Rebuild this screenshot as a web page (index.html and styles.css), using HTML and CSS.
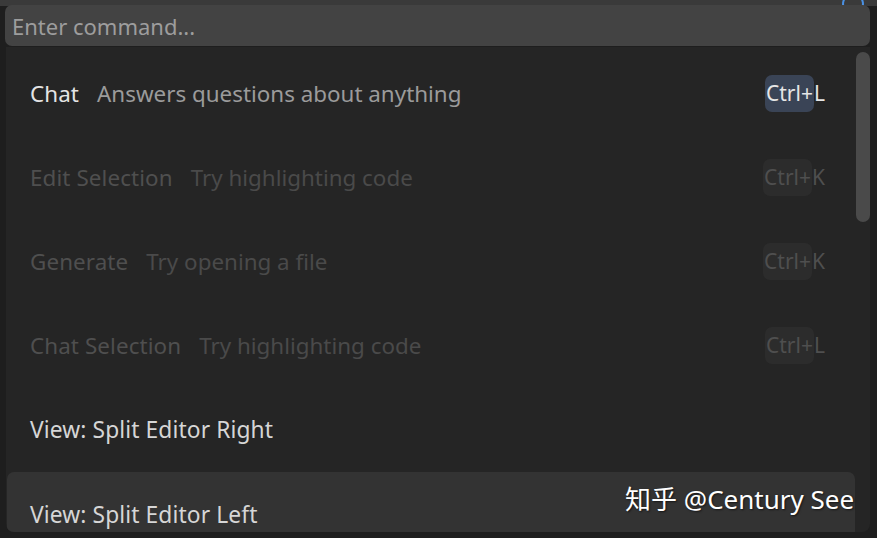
FILE: index.html
```html
<!DOCTYPE html>
<html>
<head>
    <link rel="stylesheet" href="styles.css">
</head>
<body>
    <div class="titlebar">
        <span class="account-ring"></span>
    </div>

    <div class="palette">
        <div class="command-input">Enter command...</div>

        <div class="command-list">
            <ul class="items">
                <li class="item">
                    <span class="label">Chat</span>
                    <span class="desc">Answers questions about anything</span>
                    <span class="shortcut"><span class="key">Ctrl+</span>L</span>
                </li>
                <li class="item disabled">
                    <span class="label">Edit Selection</span>
                    <span class="desc">Try highlighting code</span>
                    <span class="shortcut"><span class="key">Ctrl+</span>K</span>
                </li>
                <li class="item disabled">
                    <span class="label">Generate</span>
                    <span class="desc">Try opening a file</span>
                    <span class="shortcut"><span class="key">Ctrl+</span>K</span>
                </li>
                <li class="item disabled">
                    <span class="label">Chat Selection</span>
                    <span class="desc">Try highlighting code</span>
                    <span class="shortcut"><span class="key">Ctrl+</span>L</span>
                </li>
                <li class="item plain">
                    <span class="label">View: Split Editor Right</span>
                </li>
                <li class="item plain selected">
                    <span class="label">View: Split Editor Left</span>
                </li>
            </ul>
            <div class="scrollbar">
                <div class="thumb"></div>
            </div>
        </div>
    </div>

    <div class="watermark">知乎 @Century See</div>
</body>
</html>
```

FILE: styles.css
```css
:root {
    --bg: #1e1e1e;
    --bar: #3a3a3a;
    --input: #434343;
    --list: #252525;
    --hover: #333333;
    --text: #e4e4e4;
    --muted: #9b9b9b;
    --dim: #4f4f4f;
}

body {
    margin: 0;
    width: 877px;
    height: 538px;
    overflow: hidden;
    background: var(--bg);
    font-family: "Noto Sans", "Open Sans", sans-serif;
    position: relative;
}

.titlebar {
    height: 6px;
    background: var(--bar);
    position: relative;
}

.account-ring {
    position: absolute;
    left: 842px;
    top: -7px;
    width: 18px;
    height: 18px;
    border: 2px solid #4a90e2;
    border-radius: 50%;
}

.palette {
    margin-top: -1px;
    padding: 0 7px 0 5px;
    position: relative;
}

.command-input {
    height: 41px;
    background: var(--input);
    border-radius: 7px;
    padding-left: 7px;
    font-size: 22px;
    line-height: 43px;
    color: #9d9d9d;
}

.command-list {
    margin: 1px 0 0 1px;
    height: 485px;
    background: var(--list);
    border-radius: 0 0 8px 8px;
    overflow: hidden;
    display: flex;
    padding: 4px 0 0 1px;
    box-sizing: border-box;
}

.items {
    list-style: none;
    margin: 0;
    padding: 0;
    width: 848px;
    flex: none;
}

.item {
    height: 84px;
    display: flex;
    align-items: center;
    padding: 0 30px 0 23px;
    font-size: 22.4px;
    border-radius: 7px;
}

.item .label {
    color: var(--text);
    margin-right: 18px;
    letter-spacing: 0.1px;
}

.item .desc {
    color: var(--muted);
    flex: 1;
}

.item.plain .label {
    color: #d6d6d6;
    font-size: 22.8px;
}

.item.selected {
    background: var(--hover);
    margin-top: 1px;
}

.shortcut {
    font-size: 21px;
    color: #e6e6e6;
    display: flex;
    align-items: center;
}

.key {
    background: #3a4456;
    border-radius: 7px;
    padding: 0 1px;
    height: 37px;
    line-height: 37px;
}

.item.disabled .label,
.item.disabled .shortcut {
    color: var(--dim);
}

.item.disabled .desc {
    color: #4a4a4a;
}

.item.disabled .key {
    background: #2c2c2c;
}

.scrollbar {
    flex: none;
    width: 14px;
    margin: 1px 0 0 1px;
}

.thumb {
    height: 170px;
    background: #4a4a4a;
    border-radius: 7px;
}

.watermark {
    position: absolute;
    left: 625px;
    top: 479px;
    font-size: 26px;
    color: #ffffff;
    text-shadow: 1px 1px 2px rgba(0, 0, 0, 0.6);
    font-family: "Noto Sans", "Noto Sans CJK SC", sans-serif;
}
```
